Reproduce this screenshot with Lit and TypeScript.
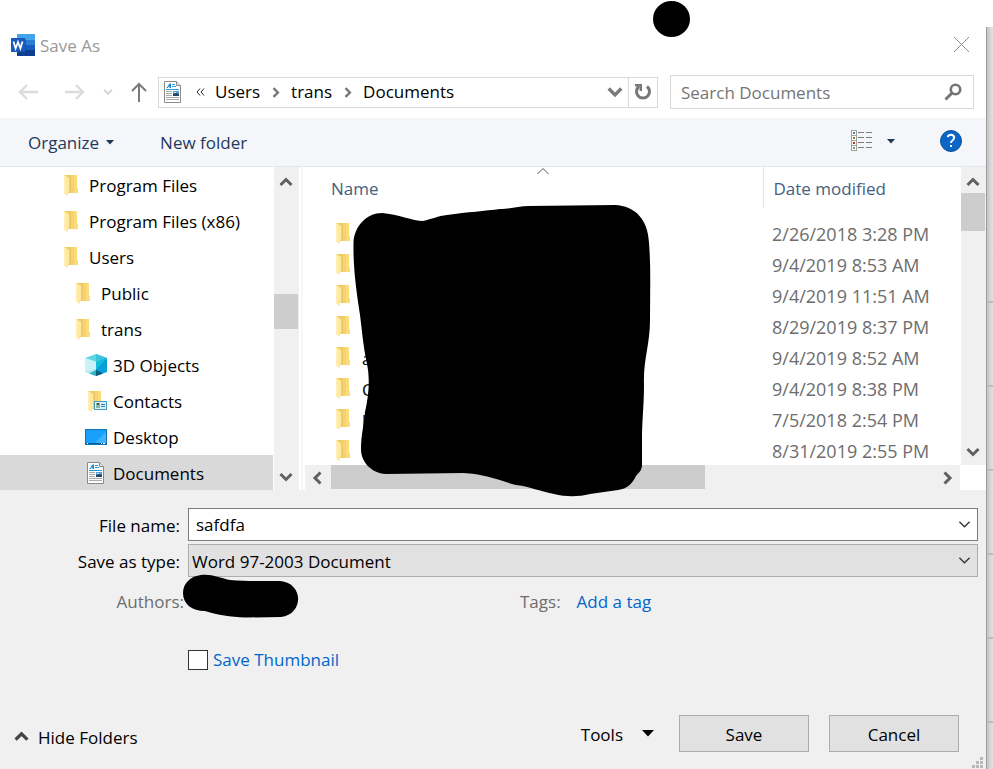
import { LitElement, html, svg, css, nothing } from "lit";
import { customElement, state } from "lit/decorators.js";
import { classMap } from "lit/directives/class-map.js";

type IconName = "folder" | "objects" | "contacts" | "desktop" | "documents";

interface TreeItem {
  label: string;
  level: number;
  icon: IconName;
}

const TREE: TreeItem[] = [
  { label: "Program Files", level: 0, icon: "folder" },
  { label: "Program Files (x86)", level: 0, icon: "folder" },
  { label: "Users", level: 0, icon: "folder" },
  { label: "Public", level: 1, icon: "folder" },
  { label: "trans", level: 1, icon: "folder" },
  { label: "3D Objects", level: 2, icon: "objects" },
  { label: "Contacts", level: 2, icon: "contacts" },
  { label: "Desktop", level: 2, icon: "desktop" },
  { label: "Documents", level: 2, icon: "documents" },
];

const FILES = [
  { name: "", date: "2/26/2018 3:28 PM" },
  { name: "", date: "9/4/2019 8:53 AM" },
  { name: "", date: "9/4/2019 11:51 AM" },
  { name: "", date: "8/29/2019 8:37 PM" },
  { name: "a", date: "9/4/2019 8:52 AM" },
  { name: "C", date: "9/4/2019 8:38 PM" },
  { name: "l", date: "7/5/2018 2:54 PM" },
  { name: "", date: "8/31/2019 2:55 PM" },
];

const folderShape = svg`
  <path d="M3 1H16V14L17 15V19H3Z" fill="#edcb66"/>
  <path d="M10 1H16V14L17 15V19H10Z" fill="#f4d36f"/>
  <path d="M13 1H16V14L17 15V19H13Z" fill="#fbdb7b"/>
  <path d="M3 1L8 4V18.500H7V22L3 19.500Z" fill="#ffe8a0"/>
  <path d="M3 1L5 2.200V20.800L3 19.500Z" fill="#ffedb4"/>`;

const ICONS = {
  folder: folderShape,
  objects: svg`
    <path d="M11 0L22 4L11 8L0 4Z" fill="#5fd6e6"/>
    <path d="M11 0L22 4L11 8Z" fill="#3cc4da"/>
    <path d="M0 4L11 8V22L0 18Z" fill="#a9eaf0"/>
    <path d="M0 4L11 8V15L0 18Z" fill="#c9f3f6"/>
    <path d="M22 4L11 8V22L22 18Z" fill="#0a9fd8"/>
    <path d="M11 8L22 4L11 16Z" fill="#14bcd8"/>
    <path d="M11 16L18 19.500L11 22Z" fill="#045f7a"/>
    <path d="M11 16L4 19.500L11 22Z" fill="#35b3c4"/>`,
  contacts: svg`${folderShape}
    <rect x="9.500" y="11.500" width="12" height="8" fill="#d8f0fa" stroke="#4a9cc4"/>
    <rect x="11" y="13" width="4" height="5" fill="#8bb7a5"/>
    <rect x="12" y="13" width="2" height="2" fill="#4a4a4a"/>
    <path d="M16 14.500H20M16 16.500H20" stroke="#2f7ea8"/>`,
  desktop: svg`
    <rect x="0.500" y="3.500" width="21" height="15" fill="#18a0fb" stroke="#0d74b8"/>
    <path d="M21 6V17H10Z" fill="#41b2fd"/>
    <path d="M1 17.500H21" stroke="#0a5a94"/>
    <path d="M2 17.500H3M16 17.500H17M18 17.500H20" stroke="#fff"/>`,
  documents: svg`
    <path d="M2.500 0.500H14.500L18.500 4.500V21.500H2.500Z" fill="#fdfdfd" stroke="#8a8a8a"/>
    <path d="M14.500 0.500V4.500H18.500" fill="#e4e4e4" stroke="#8a8a8a"/>
    <path d="M4.500 7L7.500 2.500H9V7H7.500V5.500H6.500L6 7Z" fill="#1a86c8"/>
    <path d="M10 3.500H13M10 5.500H14M4 8.500H17" stroke="#2a9ae0"/>
    <path d="M4 10.500H10M4 12.500H10M4 14.500H10M4 16.500H17M4 18.500H17" stroke="#a9a9a9"/>
    <rect x="11" y="10" width="6" height="5" fill="#5f9bcf"/>
    <path d="M11 15V13L14 12L17 13V15Z" fill="#23446a"/>
    <path d="M12 11H14V12H12Z" fill="#d4eefb"/>`,
};

const icon = (name: IconName) =>
  html`<svg class="icon" width="22" height="22" viewBox="0 0 22 22" aria-hidden="true">${ICONS[name]}</svg>`;

const CHEVRONS = {
  up: "M1.500 9L7 3.500L12.500 9",
  down: "M1.500 4L7 9.500L12.500 4",
  left: "M9.500 1.500L4 7L9.500 12.500",
  right: "M4.500 1.500L10 7L4.500 12.500",
};

const chevron = (dir: keyof typeof CHEVRONS, size: number, color: string, weight: number) =>
  html`<svg width=${size} height=${size} viewBox="0 0 14 14" fill="none" aria-hidden="true">
    <path d=${CHEVRONS[dir]} stroke=${color} stroke-width=${weight}/>
  </svg>`;

@customElement("app-root")
export class AppRoot extends LitElement {
  @state() private selected = "Documents";

  static styles = css`
    :host {
      display: block;
      font: 17px/24px "Open Sans", "Noto Sans", sans-serif;
      color: #000;
      background: #fff;
    }
    * { box-sizing: border-box; }
    svg { display: block; flex: none; }
    button, input, select { font: inherit; color: inherit; margin: 0; border-radius: 0; }
    button { padding: 0; border: 0; background: none; display: flex; align-items: center; justify-content: center; flex: none; }
    a { color: #0066cc; text-decoration: none; }

    .page { display: flex; flex-direction: column; min-height: 100vh; }
    .above { height: 27px; position: relative; flex: none; }
    .dot { position: absolute; left: 653px; top: 1px; width: 37px; height: 36px; border-radius: 50%; background: #000; }
    .desk { flex: 1; display: flex; }
    .behind {
      width: 6px;
      flex: none;
      background:
        repeating-linear-gradient(to bottom, transparent 0 22px, #bcbcbc 22px 24px, transparent 24px 84px) 0 252px no-repeat,
        linear-gradient(to right, #c4c4c4, #e4e4e4);
    }
    .dialog { flex: 1; min-width: 0; display: flex; flex-direction: column; border-right: 1px solid #9b9b9b; }

    .title { height: 48px; display: flex; align-items: center; padding: 0 16px 13px 11px; color: #999; gap: 5px; }
    .title h1 { font: inherit; margin: 0; padding-top: 2px; flex: 1; }
    .title .close { width: 17px; height: 17px; }

    .nav { display: flex; align-items: center; height: 34px; padding: 0 12px 0 18px; margin-bottom: 9px; }
    .arrows { display: flex; align-items: center; width: 140px; flex: none; }
    .arrows .fwd { margin-left: 24px; }
    .arrows .recent { margin-left: 17px; }
    .arrows .up { margin-left: 17px; }
    .address { flex: 1; min-width: 0; height: 31px; border: 1px solid #d9d9d9; display: flex; align-items: center; padding-left: 3px; }
    .crumbs { flex: 1; display: flex; align-items: center; gap: 10px; padding-left: 12px; }
    .address .drop { width: 26px; height: 29px; }
    .address .reload { width: 29px; height: 29px; border-left: 1px solid #d9d9d9; }
    .search { width: 304px; height: 34px; margin-left: 12px; border: 1px solid #d9d9d9; display: flex; align-items: center; padding: 0 11px 0 10px; flex: none; }
    .search input { flex: 1; min-width: 0; border: 0; padding: 2px 0 0; background: none; outline: none; }
    .search input::placeholder { color: #757575; opacity: 1; }

    .toolbar { height: 49px; background: #f4f6f9; border-bottom: 1px solid #e5e7e9; display: flex; align-items: center; padding: 0 24px 2px 28px; color: #1e395b; flex: none; }
    .toolbar .text { gap: 7px; margin-right: 46px; padding-top: 3px; }
    .toolbar .view { margin-left: auto; gap: 14px; }
    .toolbar .help { margin-left: 45px; }

    .main { height: 323px; display: flex; flex: none; }
    .tree { width: 273px; margin: 0 1px 0 0; padding: 0; list-style: none; overflow: hidden; flex: none; }
    .row { width: 100%; height: 36px; justify-content: flex-start; gap: 6px; padding-left: 61px; }
    .row span { padding-top: 2px; }
    .row.l1 { padding-left: 73px; }
    .row.l2 { padding-left: 85px; }
    .row.on { background: #d9d9d9; }
    .vbar { width: 25px; background: #f0f0f0; display: flex; flex-direction: column; flex: none; }
    .vbar button { width: 24px; height: 26px; }
    .vbar .scroll-up { padding-top: 5px; }
    .vbar .track { flex: 1; display: flex; flex-direction: column; }
    .vbar .thumb { width: 24px; background: #cdcdcd; }
    .tree-bar .before { flex: 101; }
    .tree-bar .thumb { flex: 35; }
    .tree-bar .after { flex: 135; }
    .list-bar .thumb { flex: 38; }
    .list-bar .after { flex: 207; }
    .splitter { width: 2px; margin: 0 2px; background: #f7f7f7; flex: none; }

    .list { flex: 1; min-width: 0; display: flex; flex-direction: column; position: relative; }
    .upper { height: 298px; display: flex; }
    .scroll { flex: 1; min-width: 0; overflow: hidden; }
    table { width: 100%; border-collapse: collapse; table-layout: fixed; }
    th { height: 41px; padding: 2px 0 0 10px; text-align: left; font-weight: 400; color: #44617f; position: relative; }
    th:first-child { padding-left: 26px; border-right: 1px solid #e5e5e5; }
    .sort { position: absolute; left: 232px; top: 0; }
    .date { width: 198px; }
    td { height: 31px; padding: 0; color: #6d6d6d; white-space: nowrap; }
    td.when { font-size: 18px; padding: 0 0 2px 9px; }
    td:first-child { padding-left: 28px; color: #000; }
    .gap td { height: 11px; }
    .name { display: flex; align-items: center; gap: 7px; height: 24px; }
    .name svg { margin-bottom: 3px; }
    .hbar { height: 25px; background: #f0f0f0; margin-right: 26px; display: flex; }
    .hbar button { width: 26px; height: 25px; }
    .hbar .thumb { flex: 374; height: 24px; background: #cdcdcd; }
    .hbar .after { flex: 229; }
    .blot { position: absolute; left: 48px; top: 38px; }

    .lower { flex: 1; background: #f0f0f0; padding: 18px 8px 0 0; display: flex; flex-direction: column; }
    .field { display: grid; grid-template-columns: 180px 1fr; column-gap: 8px; align-items: center; height: 33px; margin-bottom: 3px; }
    .field label { text-align: right; padding-top: 2px; }
    .box { position: relative; height: 33px; }
    .box input, .box select { width: 100%; height: 33px; border: 1px solid #7a7a7a; background: #fff; padding: 0 30px 0 7px; outline: none; appearance: none; }
    .box select { background: #e1e1e1; border-color: #adadad; padding: 2px 30px 0 3px; }
    .box svg { position: absolute; right: 7px; top: 10px; pointer-events: none; }
    .meta { display: flex; position: relative; height: 24px; margin-top: 10px; color: #6d6d6d; }
    .meta .who { width: 184px; text-align: right; }
    .meta .tags { margin-left: 336px; margin-right: 16px; }
    .meta .blot { left: 183px; top: -16px; }
    .thumbnail { display: flex; align-items: center; gap: 5px; margin: 34px 0 0 188px; }
    .thumbnail input { appearance: none; width: 20px; height: 20px; border: 1px solid #333; background: #fff; }
    .thumbnail label { color: #0066cc; }
    .footer { display: flex; align-items: center; margin-top: auto; padding: 0 19px 0 14px; }
    .footer .hide { gap: 9px; margin-right: auto; padding-top: 8px; }
    .footer .tools { gap: 19px; margin-right: 25px; padding-top: 2px; }
    .footer .tools svg { margin-bottom: 2px; }
    .footer .push { width: 130px; height: 37px; border: 1px solid #adadad; background: #e1e1e1; padding-top: 2px; }
    .footer .push + .push { margin-left: 20px; }
    .grip { margin: 5px -6px 0 auto; }
  `;

  private renderNav() {
    return html`
      <div class="nav">
        <div class="arrows">
          <button aria-label="Back">
            <svg width="22" height="18" viewBox="0 0 22 18" fill="none" stroke="#dcdcdc" stroke-width="2.400">
              <path d="M20 9H3M9 2L2 9L9 16"/>
            </svg>
          </button>
          <button class="fwd" aria-label="Forward">
            <svg width="22" height="18" viewBox="0 0 22 18" fill="none" stroke="#dcdcdc" stroke-width="2.400">
              <path d="M1 9H18M12 2L19 9L12 16"/>
            </svg>
          </button>
          <button class="recent" aria-label="Recent locations">${chevron("down", 10, "#d6d6d6", 3)}</button>
          <button class="up" aria-label="Up">
            <svg width="18" height="20" viewBox="0 0 18 20" fill="none" stroke="#7a7a7a" stroke-width="2">
              <path d="M9 20V2M2 9L9 2L16 9"/>
            </svg>
          </button>
        </div>
        <div class="address">
          ${icon("documents")}
          <div class="crumbs">
            <svg width="9" height="8" viewBox="0 0 9 8" fill="none" stroke="#222" role="img" aria-label="More folders">
              <path d="M4 0.500L1 4L4 7.500M8 0.500L5 4L8 7.500"/>
            </svg>
            <button>Users</button>
            ${chevron("right", 11, "#777", 3)}
            <button>trans</button>
            ${chevron("right", 11, "#777", 3)}
            <button>Documents</button>
          </div>
          <button class="drop" aria-label="Previous locations">${chevron("down", 16, "#7a7a7a", 3)}</button>
          <button class="reload" aria-label="Refresh">
            <svg width="18" height="18" viewBox="0 0 18 18" fill="none" stroke="#777" stroke-width="3">
              <path d="M13 3.500A6.500 6.500 0 1 1 5 3.500"/>
              <path d="M1 2.200H6.800V8" stroke-width="2.400"/>
            </svg>
          </button>
        </div>
        <div class="search">
          <input type="text" placeholder="Search Documents" aria-label="Search Documents">
          <svg width="18" height="18" viewBox="0 0 18 18" fill="none" stroke="#757575">
            <circle cx="11.500" cy="6.500" r="4.700" stroke-width="2.600"/>
            <path d="M8 10L1.500 16.500" stroke-width="3"/>
          </svg>
        </div>
      </div>`;
  }

  private renderToolbar() {
    const arrow = html`<svg width="8" height="5" viewBox="0 0 8 5" fill="#1e395b" aria-hidden="true"><path d="M0 0H8L4 4.500Z"/></svg>`;
    const marks = ["#3f7fb5", "#8a7a2a", "#c2320a", "#6aa36a"];
    return html`
      <div class="toolbar">
        <button class="text">Organize ${arrow}</button>
        <button class="text">New folder</button>
        <button class="view" aria-label="Change your view">
          <svg width="22" height="22" viewBox="0 0 22 22" fill="none">
            ${marks.map((color, i) => svg`
              <rect x="0.500" y=${i * 5 + 0.5} width="5" height="5" fill="#fff" stroke="#a0a0a0"/>
              <rect x="2" y=${i * 5 + 2} width="2" height="2" fill=${color}/>
              <path d=${`M7 ${i * 5 + 2.5}H13M15 ${i * 5 + 2.5}H21`} stroke="#7d7d7d"/>`)}
          </svg>
          ${arrow}
        </button>
        <button class="help" aria-label="Help">
          <svg width="22" height="22" viewBox="0 0 22 22">
            <circle cx="11" cy="11" r="10.500" fill="#0a66c8" stroke="#0a4f96"/>
            <path d="M7.800 7.200Q8.200 4.800 11 4.800T14.200 7.600Q14.200 9 12.600 10.200T11 13" fill="none" stroke="#fff" stroke-width="2"/>
            <rect x="10" y="15" width="2" height="2" fill="#fff"/>
          </svg>
        </button>
      </div>`;
  }

  private renderTree() {
    return html`
      <ul class="tree">
        ${TREE.map((item) => html`
          <li>
            <button
              class=${classMap({ row: true, [`l${item.level}`]: true, on: item.label === this.selected })}
              @click=${() => (this.selected = item.label)}
            >${icon(item.icon)}<span>${item.label}</span></button>
          </li>`)}
      </ul>
      <div class="vbar tree-bar">
        <button class="scroll-up" aria-label="Scroll up">${chevron("up", 14, "#606060", 3)}</button>
        <div class="track"><div class="before"></div><div class="thumb"></div><div class="after"></div></div>
        <button aria-label="Scroll down">${chevron("down", 14, "#606060", 3)}</button>
      </div>`;
  }

  private renderList() {
    return html`
      <div class="list">
        <div class="upper">
          <div class="scroll">
            <table>
              <thead>
                <tr>
                  <th>Name
                    <svg class="sort" width="12" height="8" viewBox="0 0 12 8" fill="none" stroke="#555"><path d="M0.500 7L6 1.500L11.500 7"/></svg>
                  </th>
                  <th class="date">Date modified</th>
                </tr>
              </thead>
              <tbody>
                <tr class="gap"><td colspan="2"></td></tr>
                ${FILES.map((file) => html`
                  <tr>
                    <td><div class="name">${icon("folder")}${file.name ? html`<span>${file.name}</span>` : nothing}</div></td>
                    <td class="when">${file.date}</td>
                  </tr>`)}
              </tbody>
            </table>
          </div>
          <div class="vbar list-bar">
            <button class="scroll-up" aria-label="Scroll up">${chevron("up", 14, "#606060", 3)}</button>
            <div class="track"><div class="thumb"></div><div class="after"></div></div>
            <button aria-label="Scroll down">${chevron("down", 14, "#606060", 3)}</button>
          </div>
        </div>
        <div class="hbar">
          <button aria-label="Scroll left">${chevron("left", 14, "#606060", 3)}</button>
          <div class="thumb"></div>
          <div class="after"></div>
          <button aria-label="Scroll right">${chevron("right", 14, "#606060", 3)}</button>
        </div>
        <svg class="blot" width="299" height="293" viewBox="353 205 299 293" aria-hidden="true">
          <path d="M353.500 243C354 226 367 213 382 213C398 214 413 221 423 221C432 219 438 216 447 215C468 212 485 211 500 209C511 209 518 206 529 206L615 205C635 206 648 219 649 243C651 267 650 293 650 320C650 345 643 360 644 385C644 405 642 420 642 440V466C641 473 637 473 635 478C630 487 624 489 618 490L590 494C578 497 566 497 554 494C538 491 532 487 516 485C498 480 485 474 463 473L386 474C371 473 361 462 361 449C361 435 364 425 365 412C369 395 370 378 367 364C363 345 362 330 360 315C357 295 353 270 353.500 243Z"/>
        </svg>
      </div>`;
  }

  render() {
    return html`
      <div class="page">
        <div class="above"><div class="dot"></div></div>
        <div class="desk">
          <div class="dialog" role="dialog" aria-label="Save As">
            <div class="title">
              <svg width="24" height="22" viewBox="0 0 24 22" aria-hidden="true">
                <rect x="6" width="18" height="6" fill="#41a5ee"/>
                <rect x="6" y="6" width="18" height="5" fill="#2b7cd3"/>
                <rect x="6" y="11" width="18" height="5" fill="#185abd"/>
                <rect x="6" y="16" width="18" height="6" fill="#103f91"/>
                <rect x="6" y="5" width="9" height="14" fill="#0f3f8a" opacity="0.500"/>
                <rect y="4" width="14" height="14" fill="#185abd"/>
                <path d="M2.500 7.500L4.600 14.500L7 8L9.400 14.500L11.500 7.500" fill="none" stroke="#fff" stroke-width="1.800"/>
              </svg>
              <h1>Save As</h1>
              <button class="close" aria-label="Close">
                <svg width="17" height="17" viewBox="0 0 17 17" stroke="#8c8c8c"><path d="M1 1L16 16M16 1L1 16"/></svg>
              </button>
            </div>
            ${this.renderNav()}
            ${this.renderToolbar()}
            <div class="main">
              ${this.renderTree()}
              <div class="splitter"></div>
              ${this.renderList()}
            </div>
            <div class="lower">
              <div class="field">
                <label for="file-name">File name:</label>
                <div class="box">
                  <input id="file-name" type="text" .value=${"safdfa"}>
                  ${chevron("down", 13, "#333", 1.4)}
                </div>
              </div>
              <div class="field">
                <label for="file-type">Save as type:</label>
                <div class="box">
                  <select id="file-type"><option>Word 97-2003 Document</option></select>
                  ${chevron("down", 13, "#333", 1.4)}
                </div>
              </div>
              <div class="meta">
                <span class="who">Authors:</span>
                <span class="tags">Tags:</span>
                <a href="#">Add a tag</a>
                <svg class="blot" width="116" height="44" viewBox="183 574 116 44" aria-hidden="true">
                  <path d="M201 575C213 574 219 578 230 580C240 581 250 581 260 581H280C304 583 304 614 281 617L246 617.500C229 617 219 615 205 611C192 611 183 604 183 593C183 583 191 576 201 575Z"/>
                </svg>
              </div>
              <div class="thumbnail">
                <input id="thumb" type="checkbox">
                <label for="thumb">Save Thumbnail</label>
              </div>
              <div class="footer">
                <button class="hide">${chevron("up", 15, "#444", 3)} Hide Folders</button>
                <button class="tools">Tools
                  <svg width="12" height="7" viewBox="0 0 12 7" aria-hidden="true"><path d="M0 0H12L6 6.500Z"/></svg>
                </button>
                <button class="push">Save</button>
                <button class="push">Cancel</button>
              </div>
              <svg class="grip" width="12" height="12" viewBox="0 0 12 12" fill="#b8b8b8" aria-hidden="true">
                <path d="M8 0h3v3h-3zM4 4h3v3h-3zM8 4h3v3h-3zM0 8h3v3h-3zM4 8h3v3h-3zM8 8h3v3h-3z"/>
              </svg>
            </div>
          </div>
          <div class="behind"></div>
        </div>
      </div>`;
  }
}
